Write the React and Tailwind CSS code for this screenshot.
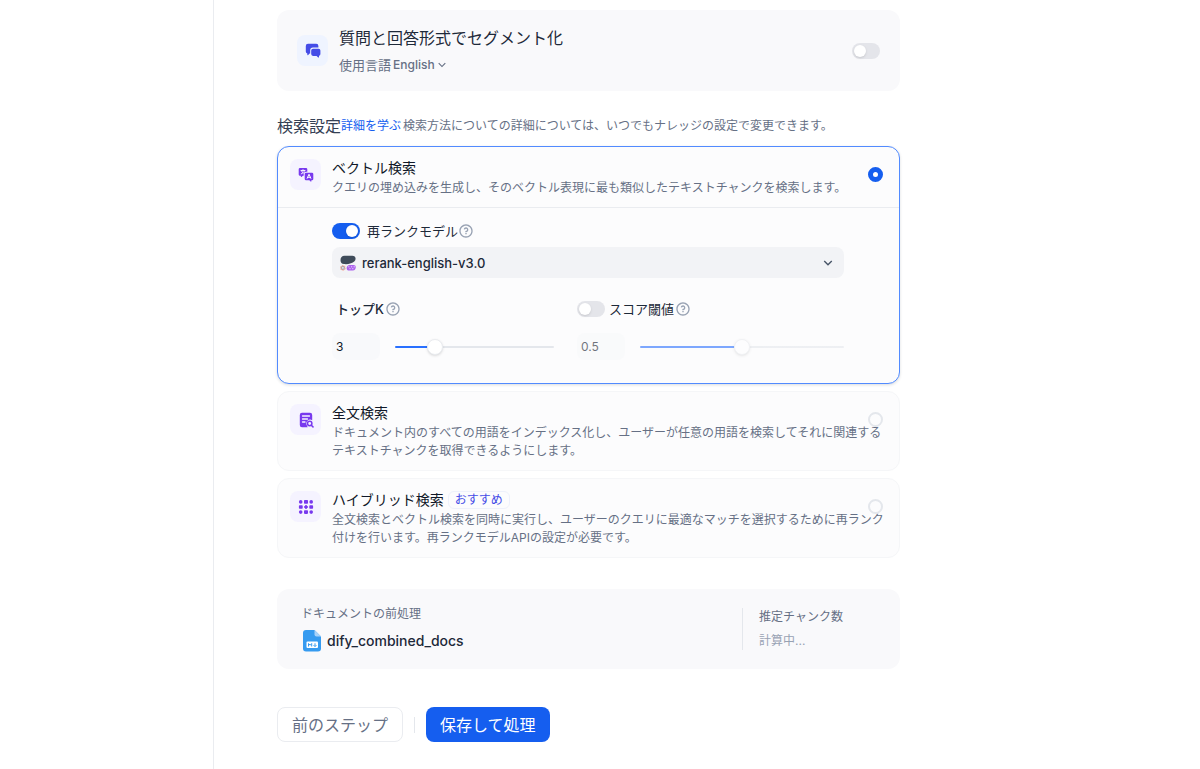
import React, { useState } from 'react';
import { RiArrowDownSLine, RiQuestionLine } from 'react-icons/ri';

// --- ICONS ---

const ChatIcon = () => (
    <svg viewBox="0 0 16 16" className="size-4" fill="#444ce7" aria-hidden="true">
        <path d="M3 .8h8.200a2.200 2.200 0 0 1 2.200 2.200v1.600H8A2.800 2.800 0 0 0 5.200 7.400v3.200H4.600L3.200 12c-.4.4-.9.2-.9-.4V10.500A2.200 2.200 0 0 1 .8 8.400V3A2.200 2.200 0 0 1 3 .8z" />
        <path d="M8 5.700h5.600a1.800 1.800 0 0 1 1.800 1.800v3.600a1.800 1.800 0 0 1-1.400 1.750V14c0 .6-.5.800-.9.400L11.600 12.900H8a1.800 1.800 0 0 1-1.800-1.800V7.500A1.800 1.800 0 0 1 8 5.700z" />
    </svg>
);

const VectorIcon = () => (
    <svg viewBox="0 0 16 16" className="size-4" aria-hidden="true">
        <path d="M2 1h6a1.300 1.300 0 0 1 1.300 1.300v2.400H8A2.300 2.300 0 0 0 5.700 7v1.700H4.800L3.600 9.900c-.3.3-.8.100-.8-.3v-.9H2A1.300 1.300 0 0 1 .7 7.400V2.300A1.300 1.300 0 0 1 2 1z" fill="#7839ee" />
        <path d="M2.600 3.500h4.800M5 2.300v1.200M6.500 3.600C6 5.100 4.600 6.400 2.900 7M3.500 3.700c.4 1.100 1 1.900 2 2.600" stroke="#fff" strokeWidth=".9" fill="none" />
        <path d="M8 5.700h6a1.300 1.300 0 0 1 1.300 1.300v5a1.300 1.300 0 0 1-1.300 1.300h-.6v1c0 .4-.5.600-.8.300l-1.300-1.300H8A1.300 1.300 0 0 1 6.700 12V7A1.300 1.300 0 0 1 8 5.700z" fill="#7839ee" />
        <path d="M9 11.700l2-4.500 2 4.500M9.700 10.300h2.600" stroke="#fff" strokeWidth="1" fill="none" />
    </svg>
);

const FullTextIcon = () => (
    <svg viewBox="0 0 16 16" className="size-4" aria-hidden="true">
        <path d="M4 .8h8A2.200 2.200 0 0 1 14.200 3v5.300a3.800 3.800 0 0 0-5.400 5L9.700 15.200H4A2.200 2.200 0 0 1 1.800 13V3A2.200 2.200 0 0 1 4 .8z" fill="#7839ee" />
        <path d="M4.500 4h7M4.500 7h5M4.500 10h2.500" stroke="#f5f3ff" strokeWidth="1.300" strokeLinecap="round" />
        <circle cx="11.700" cy="11.500" r="2.200" stroke="#7839ee" strokeWidth="1.500" fill="none" />
        <path d="M13.300 13.200l1.700 1.700" stroke="#7839ee" strokeWidth="1.500" strokeLinecap="round" />
    </svg>
);

const HybridIcon = () => (
    <svg viewBox="0 0 16 16" className="size-4" fill="#7839ee" aria-hidden="true">
        <circle cx="2.700" cy="2.900" r="1.800" />
        <rect x="6" y="1.100" width="4" height="3.600" rx=".8" />
        <circle cx="13.200" cy="2.900" r="1.800" />
        <rect x=".9" y="6.200" width="3.800" height="3.600" rx=".8" />
        <path d="M8 6l.9 1.100L10 8l-1.100.9L8 10l-.9-1.100L6 8l1.100-.9z" stroke="#7839ee" strokeWidth=".6" />
        <rect x="11.300" y="6.200" width="3.800" height="3.600" rx=".8" />
        <circle cx="2.700" cy="13.100" r="1.800" />
        <rect x="6" y="11.300" width="4" height="3.600" rx=".8" />
        <circle cx="13.200" cy="13.100" r="1.800" />
    </svg>
);

const ModelIcon = () => (
    <svg viewBox="0 0 16 16" className="size-4 shrink-0" aria-hidden="true">
        <path d="M4.500.8h7.800c2 0 3.300 1 3.300 2.900 0 2.300-2 3.400-4.600 4.500-2.600 1-4.900 1.200-7 .9C1.700 8.800.5 7.400.5 5.200.5 2.600 2 .8 4.500.8z" fill="#3f4b5a" />
        <circle cx="2.900" cy="12.900" r="2.200" fill="#98a2b3" stroke="#f3aa98" strokeWidth="1.200" strokeDasharray="1.400 .7" />
        <circle cx="2.900" cy="12.900" r=".8" fill="#fff" />
        <path d="M9.500 9.900h4c1.400 0 2.300.9 2.300 2.300s-1 3.400-3 3.400H9c-1.300 0-2.400-.9-2.400-2.400 0-1.900 1.300-3.300 2.900-3.300z" fill="#ad63ee" />
        <path d="M8.200 11.800h1.200M11 11.800h1.200M13.600 11.800h1.200M9.400 13.700h1.200M12.200 13.700h1.200" stroke="#efe0ff" strokeWidth=".9" />
    </svg>
);

const FileIcon = () => (
    <svg viewBox="-1 0 20 24" className="h-6 w-5 shrink-0" aria-hidden="true">
        <path d="M4 1h8.500L19 7.500V19.500a3 3 0 0 1-3 3H4a3 3 0 0 1-3-3V4a3 3 0 0 1 3-3z" fill="#369bf0" />
        <path d="M12.500 1L19 7.500h-4.500a2 2 0 0 1-2-2z" fill="#a9d2f8" />
        <rect x="4.500" y="12.500" width="11.500" height="6.500" rx="1" fill="#fff" />
        <path d="M6.500 17.500v-3l1.600 1.700 1.600-1.700v3M13 14.300v3M11.600 16.200l1.400 1.400 1.400-1.400" stroke="#369bf0" strokeWidth="1" fill="none" />
    </svg>
);

// --- CONTROLS ---

const Switch = ({ id, label, checked, onChange }) => (
    <input
        id={id}
        type="checkbox"
        role="switch"
        aria-label={label}
        checked={checked}
        onChange={(e) => onChange(e.target.checked)}
        className="flex h-4 w-7 shrink-0 cursor-pointer appearance-none items-center rounded-full bg-[#e4e5ea] px-0.5 transition-colors before:size-3 before:rounded-full before:bg-white before:shadow-sm checked:justify-end checked:bg-[#155eef]"
    />
);

const Slider = ({ label, value, min, max, step, onChange, disabled }) => {
    const percent = ((value - min) / (max - min)) * 100;

    return (
        <input
            type="range"
            aria-label={label}
            min={min}
            max={max}
            step={step}
            value={value}
            disabled={disabled}
            onChange={(e) => onChange(Number(e.target.value))}
            style={{ backgroundImage: `linear-gradient(to right, #2970ff ${percent}%, #e4e7ec ${percent}%)` }}
            className="h-0.5 min-w-0 flex-1 appearance-none rounded-full [&::-webkit-slider-thumb]:size-4 [&::-webkit-slider-thumb]:appearance-none [&::-webkit-slider-thumb]:rounded-full [&::-webkit-slider-thumb]:border [&::-webkit-slider-thumb]:border-[#eaecf0] [&::-webkit-slider-thumb]:bg-white [&::-webkit-slider-thumb]:shadow-sm"
        />
    );
};

const NumberBox = ({ label, value, onChange, disabled }) => (
    <input
        type="text"
        inputMode="decimal"
        aria-label={label}
        value={value}
        disabled={disabled}
        onChange={(e) => onChange(Number(e.target.value) || 0)}
        className="h-[27px] w-12 shrink-0 rounded-lg bg-[#f8f9fb] px-1 text-xs text-[#101828]"
    />
);

const Hint = () => <RiQuestionLine className="size-4 shrink-0 text-[#98a2b3]" aria-hidden="true" />;

const MethodCard = ({ id, icon, title, badge, description, selected, onSelect, children }) => (
    <section
        className={`rounded-xl border bg-[#fcfcfd] ${
            selected ? 'border-[#528bff] shadow-[0_1px_3px_rgba(16,24,40,0.15)]' : 'border-[#f5f6f8]'
        }`}
    >
        <div className="relative flex gap-[11px] px-3 pt-3 pb-2.5">
            <div className="flex size-[31px] shrink-0 items-center justify-center rounded-lg bg-[#f5f3ff]">{icon}</div>
            <div className="min-w-0">
                <label htmlFor={id} className="flex h-[18px] items-center gap-1 text-sm leading-[18px] text-[#101828]">
                    {title}
                    {badge && (
                        <span className="rounded-md border border-[#eef1fb] px-1.5 text-xs leading-4 text-[#444ce7]">{badge}</span>
                    )}
                </label>
                <p className="mt-0.5 text-xs leading-[18px] whitespace-pre-line text-[#667085]">{description}</p>
            </div>
            <input
                id={id}
                type="radio"
                name="method"
                checked={selected}
                onChange={onSelect}
                className="absolute top-5 right-4 size-[15px] appearance-none rounded-full border-2 border-[#e4e7ec] checked:border-[5px] checked:border-[#155eef] checked:bg-white"
            />
        </div>
        {children}
    </section>
);

const App = () => {
    const [qaMode, setQaMode] = useState(false);
    const [method, setMethod] = useState('vector');
    const [rerank, setRerank] = useState(true);
    const [topK, setTopK] = useState(3);
    const [useScore, setUseScore] = useState(false);
    const [score, setScore] = useState(0.5);

    return (
        <div className="flex min-h-screen bg-white font-[Inter,'Noto_Sans_CJK_JP',sans-serif]">
            <aside className="w-[214px] shrink-0 border-r border-[#eaecf0]" />

            <main className="min-w-0 flex-1 pt-[10px] pr-[300px] pb-6 pl-[63px]">
                {/* Q&A segmentation */}
                <section className="flex items-center gap-[11px] rounded-xl bg-[#f9f9fb] px-5 py-4">
                    <div className="flex size-[31px] shrink-0 items-center justify-center rounded-lg bg-[#eff4ff]">
                        <ChatIcon />
                    </div>
                    <div className="flex flex-1 flex-col gap-[5px]">
                        <label htmlFor="qa-mode" className="text-base leading-6 text-[#1d2939]">質問と回答形式でセグメント化</label>
                        <div className="flex h-5 items-center text-[13px] leading-5 text-[#667085]">
                            <label htmlFor="language">使用言語</label>
                            <select id="language" className="ml-0.5 appearance-none text-xs font-medium [field-sizing:content]">
                                <option>English</option>
                            </select>
                            <RiArrowDownSLine className="size-[14px]" />
                        </div>
                    </div>
                    <Switch id="qa-mode" checked={qaMode} onChange={setQaMode} />
                </section>

                {/* Retrieval settings */}
                <div className="mt-[23px] mb-2 flex items-center text-xs leading-6 whitespace-nowrap text-[#667085]">
                    <h2 className="text-base leading-6 text-[#344054]">検索設定</h2>
                    <a href="#" className="text-[#155eef]">詳細を学ぶ</a>
                    <span className="ml-0.5">検索方法についての詳細については、いつでもナレッジの設定で変更できます。</span>
                </div>

                <div className="flex flex-col gap-[7px]">
                    <MethodCard
                        id="vector"
                        icon={<VectorIcon />}
                        title="ベクトル検索"
                        description="クエリの埋め込みを生成し、そのベクトル表現に最も類似したテキストチャンクを検索します。"
                        selected={method === 'vector'}
                        onSelect={() => setMethod('vector')}
                    >
                        <div className="border-t border-[#eaecf0] pt-[13px] pr-[55px] pb-[23px] pl-[54px] text-[13px] leading-5 text-[#1d2939]">
                            <div className="flex items-center">
                                <Switch id="rerank" checked={rerank} onChange={setRerank} />
                                <label htmlFor="rerank" className="ml-[7px]">再ランクモデル</label>
                                <Hint />
                            </div>
                            <div className="mt-1.5 flex h-[31px] items-center gap-1.5 rounded-lg bg-[#f2f3f6] px-2">
                                <ModelIcon />
                                <select aria-label="再ランクモデル" className="min-w-0 flex-1 appearance-none font-medium">
                                    <option>rerank-english-v3.0</option>
                                </select>
                                <RiArrowDownSLine className="size-4 text-[#475467]" />
                            </div>

                            <div className="mt-[21px] grid grid-cols-[222fr_267fr] gap-x-[23px] gap-y-[14px]">
                                <div className="flex items-center gap-px pl-1">
                                    <span className="font-medium">トップK</span>
                                    <Hint />
                                </div>
                                <div className="flex items-center gap-px">
                                    <Switch id="use-score" checked={useScore} onChange={setUseScore} />
                                    <label htmlFor="use-score" className="ml-[3px]">スコア閾値</label>
                                    <Hint />
                                </div>
                                <div className="flex items-center gap-[15px]">
                                    <NumberBox label="トップK" value={topK} onChange={setTopK} />
                                    <Slider label="トップK" min={1} max={10} step={1} value={topK} onChange={setTopK} />
                                </div>
                                <div className={`flex items-center gap-[15px] ${useScore ? '' : 'opacity-60'}`}>
                                    <NumberBox label="スコア閾値" value={score} onChange={setScore} disabled={!useScore} />
                                    <Slider label="スコア閾値" min={0} max={1} step={0.01} value={score} onChange={setScore} disabled={!useScore} />
                                </div>
                            </div>
                        </div>
                    </MethodCard>

                    <MethodCard
                        id="fulltext"
                        icon={<FullTextIcon />}
                        title="全文検索"
                        description={'ドキュメント内のすべての用語をインデックス化し、ユーザーが任意の用語を検索してそれに関連する\nテキストチャンクを取得できるようにします。'}
                        selected={method === 'fulltext'}
                        onSelect={() => setMethod('fulltext')}
                    />

                    <MethodCard
                        id="hybrid"
                        icon={<HybridIcon />}
                        title="ハイブリッド検索"
                        badge="おすすめ"
                        description={'全文検索とベクトル検索を同時に実行し、ユーザーのクエリに最適なマッチを選択するために再ランク\n付けを行います。再ランクモデルAPIの設定が必要です。'}
                        selected={method === 'hybrid'}
                        onSelect={() => setMethod('hybrid')}
                    />
                </div>

                {/* Source summary */}
                <section className="mt-[31px] flex items-center rounded-xl bg-[#f9f9fb] pt-[15px] pb-4 pl-6 text-xs text-[#667085]">
                    <div className="flex flex-1 flex-col gap-[5px]">
                        <div className="leading-5">ドキュメントの前処理</div>
                        <div className="flex h-6 items-center gap-1.5 text-sm font-medium text-[#1d2939]">
                            <FileIcon />
                            dify_combined_docs
                        </div>
                    </div>
                    <div className="flex w-[158px] flex-col gap-1.5 border-l border-[#e4e7ec] pl-4 leading-[18px]">
                        <div>推定チャンク数</div>
                        <div className="text-[#98a2b3]">計算中...</div>
                    </div>
                </section>

                <div className="mt-[38px] flex items-center gap-[11px]">
                    <button className="h-[35px] rounded-lg border border-[#eaecf0] bg-white px-[14px] text-base text-[#667085]">前のステップ</button>
                    <div className="h-4 w-px bg-[#e4e7ec]" />
                    <button className="h-[35px] rounded-lg bg-[#155eef] px-[14px] text-base text-white">保存して処理</button>
                </div>
            </main>
        </div>
    );
};

export default App;
